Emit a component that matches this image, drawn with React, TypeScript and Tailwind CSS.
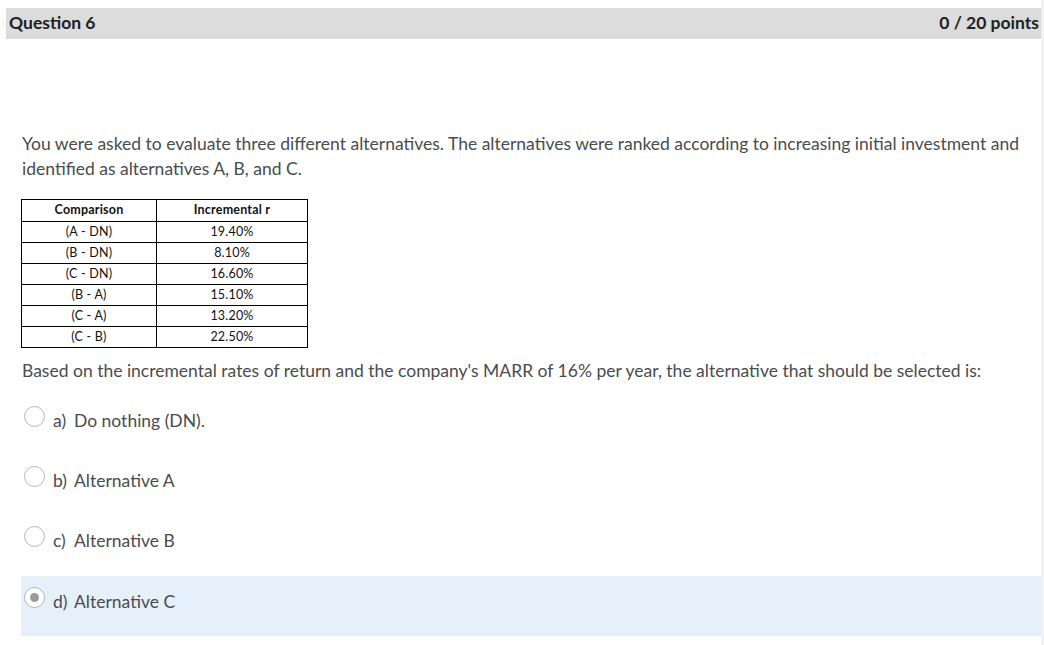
import React from "react";

const rows: [string, string][] = [
  ["(A - DN)", "19.40%"],
  ["(B - DN)", "8.10%"],
  ["(C - DN)", "16.60%"],
  ["(B - A)", "15.10%"],
  ["(C - A)", "13.20%"],
  ["(C - B)", "22.50%"],
];

const options = [
  { label: "a)", text: "Do nothing (DN).", selected: false },
  { label: "b)", text: "Alternative A", selected: false },
  { label: "c)", text: "Alternative B", selected: false },
  { label: "d)", text: "Alternative C", selected: true },
];

function Radio({ selected }: { selected: boolean }) {
  return (
    <div className="w-[21px] h-[21px] rounded-full border border-[#b4b4b8] bg-white flex items-center justify-center shrink-0">
      {selected && <div className="w-[9px] h-[9px] rounded-full bg-[#9a9ba2]" />}
    </div>
  );
}

export default function App() {
  return (
    <div className="w-[1044px] h-[645px] bg-white flex overflow-hidden" style={{ fontFamily: "Lato, 'Noto Sans', sans-serif" }}>
      <div className="flex-1 pl-[6px] pt-[8px]">
        <div className="h-[31px] bg-[#dcdcdc] flex items-center justify-between pl-[3px] pr-[2px] text-[17.5px] font-bold text-[#202122]">
          <span>Question 6</span>
          <span>0 / 20 points</span>
        </div>
        <div className="pl-[15px] pt-[92px] text-[#494c4e]">
          <p className="text-[17.5px] leading-[25px] pl-[1px]">
            You were asked to evaluate three different alternatives. The alternatives were ranked according to increasing initial investment and identified as alternatives A, B, and C.
          </p>
          <table className="mt-[18px] border-collapse border border-black text-[#111] text-[12.5px] leading-none tracking-[0.2px]" style={{ fontFamily: "Lato, sans-serif" }}>
            <thead>
              <tr className="h-[22px]">
                <th className="w-[135px] border border-black font-bold text-center align-middle">Comparison</th>
                <th className="w-[151px] border border-black font-bold text-center align-middle">Incremental r</th>
              </tr>
            </thead>
            <tbody>
              {rows.map(([a, b]) => (
                <tr key={a} className="h-[21px]">
                  <td className="border border-black text-center align-middle">{a}</td>
                  <td className="border border-black text-center align-middle">{b}</td>
                </tr>
              ))}
            </tbody>
          </table>
          <p className="mt-[10px] text-[17.5px] leading-[25px] pl-[1px]">
            Based on the incremental rates of return and the company's MARR of 16% per year, the alternative that should be selected is:
          </p>
          <div className="mt-[12px]">
            {options.map((o) => (
              <div
                key={o.label}
                className={`h-[60px] flex items-start pt-[11px] pl-[3px] ${o.selected ? "bg-[#e6f0fa] mt-[1px]" : ""}`}
              >
                <Radio selected={o.selected} />
                <div className="ml-[8px] mt-[4px] text-[17.5px] leading-[22px] flex">
                  <span className="w-[21px]">{o.label}</span>
                  <span>{o.text}</span>
                </div>
              </div>
            ))}
          </div>
        </div>
      </div>
      <div className="w-[3px] bg-[#f2f2f2] ml-[0px]" />
    </div>
  );
}
